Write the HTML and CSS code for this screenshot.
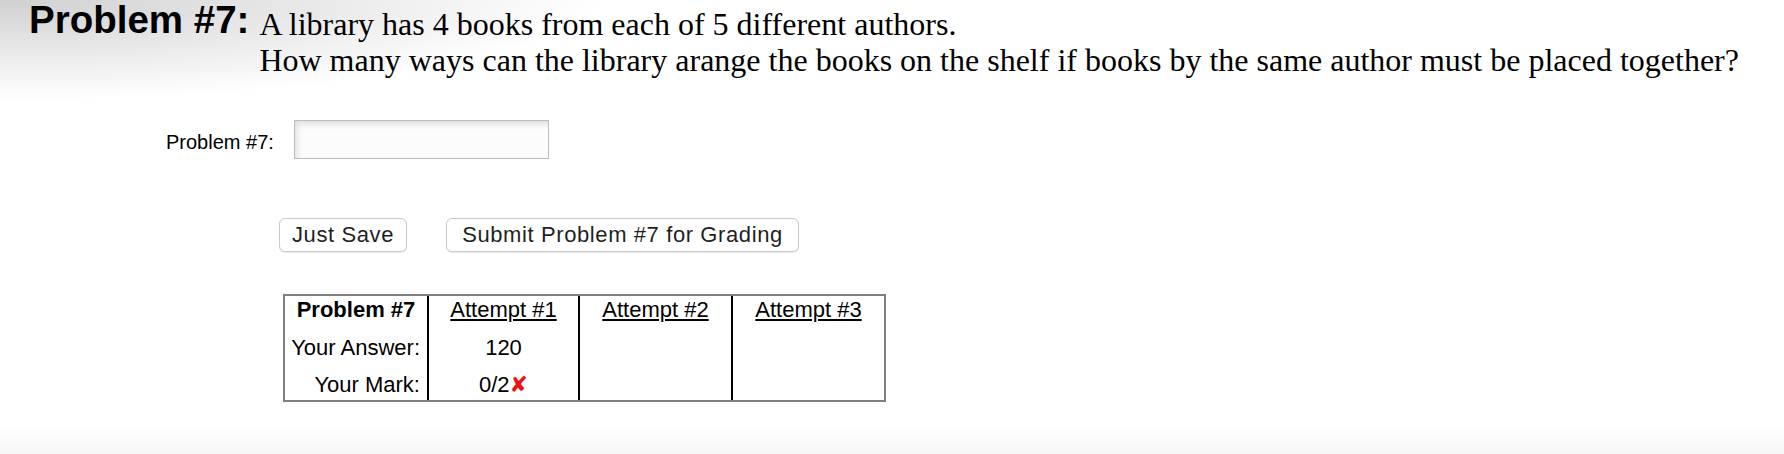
FILE: index.html
```html
<!DOCTYPE html>
<html lang="en">
<head>
<meta charset="utf-8">
<title>Problem #7</title>
<link rel="stylesheet" href="styles.css">
</head>
<body>
<div class="page">
  <div class="problem-head">
    <h2 class="problem-title">Problem #7:</h2>
    <div class="problem-text">A library has 4 books from each of 5 different authors.<br>How many ways can the library arange the books on the shelf if books by the same author must be placed together?</div>
  </div>

  <div class="answer-row">
    <label class="answer-label" for="ans7">Problem #7:</label>
    <input class="answer-input" id="ans7" type="text">
  </div>

  <div class="button-row">
    <button class="btn btn-save" type="button">Just Save</button>
    <button class="btn btn-submit" type="button">Submit Problem #7 for Grading</button>
  </div>

  <div class="attempts">
    <div class="cell cell-label cell-head">Problem #7</div>
    <div class="cell cell-col"><a class="attempt-link" href="#">Attempt #1</a></div>
    <div class="cell cell-col"><a class="attempt-link" href="#">Attempt #2</a></div>
    <div class="cell cell-col"><a class="attempt-link" href="#">Attempt #3</a></div>

    <div class="cell cell-label">Your Answer:</div>
    <div class="cell cell-col">120</div>
    <div class="cell cell-col"></div>
    <div class="cell cell-col"></div>

    <div class="cell cell-label">Your Mark:</div>
    <div class="cell cell-col">0/2<span class="mark-x">✘</span></div>
    <div class="cell cell-col"></div>
    <div class="cell cell-col"></div>
  </div>
</div>
</body>
</html>
```

FILE: styles.css
```css
html, body {
  margin: 0;
  padding: 0;
}

body {
  width: 1784px;
  height: 454px;
  overflow: hidden;
  font-family: "Liberation Sans", Arial, Helvetica, sans-serif;
  color: #000;
  background-color: #fff;
  background-image:
    radial-gradient(ellipse 600px 100px at 0 0, rgba(200, 200, 200, 0.85), rgba(255, 255, 255, 0) 100%),
    linear-gradient(to bottom, rgba(255, 255, 255, 0) 0, rgba(255, 255, 255, 0) 425px, #f6f6f6 454px);
}

.page {
  display: flex;
  flex-direction: column;
  align-items: flex-start;
}

.problem-head {
  display: flex;
  align-items: flex-start;
  padding-left: 29px;
}

.problem-title {
  margin: 0;
  font-family: "Liberation Sans", Arial, Helvetica, sans-serif;
  font-weight: bold;
  font-size: 38.5px;
  line-height: 39px;
  white-space: nowrap;
}

.problem-text {
  margin: 6px 0 0 10px;
  font-family: "Liberation Serif", "Times New Roman", serif;
  font-size: 32px;
  line-height: 36px;
  white-space: nowrap;
}

.answer-row {
  display: flex;
  align-items: flex-start;
  gap: 20px;
  margin-top: 42px;
  padding-left: 166px;
}

.answer-label {
  margin-top: 11px;
  font-size: 20px;
  line-height: 23px;
}

.answer-input {
  box-sizing: border-box;
  width: 255px;
  height: 39px;
  margin: 0;
  padding: 0 8px;
  border: 1px solid #bdbdbd;
  border-radius: 0;
  background: #fcfcfd;
  box-shadow: inset 4px 5px 6px -2px rgba(0, 0, 0, 0.12);
  font-family: "Liberation Sans", Arial, sans-serif;
  font-size: 20px;
  outline: none;
}

.button-row {
  display: flex;
  gap: 39px;
  margin-top: 59px;
  padding-left: 279px;
}

.btn {
  box-sizing: border-box;
  height: 34px;
  margin: 0;
  padding: 0;
  border: 1px solid #cbcbcb;
  border-radius: 6px;
  background: #fff;
  box-shadow: 0 1px 1px rgba(0, 0, 0, 0.08);
  color: #1f1f1f;
  font-family: "Liberation Sans", Arial, Helvetica, sans-serif;
  font-size: 22px;
  letter-spacing: 0.6px;
  line-height: 32px;
  text-align: center;
  white-space: nowrap;
}

.btn-save {
  width: 128px;
}

.btn-submit {
  width: 353px;
}

.attempts {
  display: grid;
  grid-template-columns: 142px 151px 153px 153px;
  grid-template-rows: 38px 37px 29px;
  margin-top: 42px;
  margin-left: 283px;
  border: 2px solid #808080;
  font-size: 22px;
}

.cell {
  box-sizing: border-box;
  padding-top: 1px;
  line-height: 25px;
  white-space: nowrap;
}

.cell-label {
  padding-right: 7px;
  text-align: right;
}

.cell-head {
  padding-right: 0;
  text-align: center;
  font-weight: bold;
}

.cell-col {
  border-left: 2px solid #000;
  text-align: center;
}

.attempt-link {
  color: #000;
  text-decoration: underline;
}

.mark-x {
  color: #ee1111;
  font-family: "DejaVu Sans", sans-serif;
  font-weight: bold;
  font-size: 22px;
}
```
